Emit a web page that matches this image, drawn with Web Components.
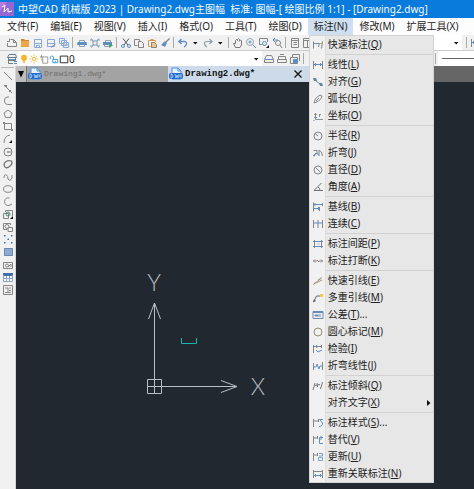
<!DOCTYPE html>
<html lang="zh-CN">
<head>
<meta charset="utf-8">
<title>中望CAD 机械版 2023</title>
<style>
html, body { margin: 0; height: 100%; }
body { font: 10px/17px "Noto Sans", "Noto Sans CJK SC", sans-serif; color: #1c1c1c; overflow: hidden; background: #212830; }
</style>
</head>
<body>
<cad-app></cad-app>
<script>
const B = '#5f8fc2', G = '#858585';
const s = (d, c = G, w = 1) => `<path d="${d}" fill="none" stroke="${c}" stroke-width="${w}"/>`;
const f = (d, c) => `<path d="${d}" fill="${c}"/>`;
const c = (x, y, r, col = G) => `<circle cx="${x}" cy="${y}" r="${r}" fill="none" stroke="${col}"/>`;
const ICONS = {
  new: s('M1.5 6V9.500H10.500V5.500L7.500 2.500H4.500M1 4.500H3.500V1.500M7.500 2.500V5.500H10'),
  open: f('M2 2H5L6 3H10V5H2Z', '#d18a2d') + f('M2 4H10V10H2Z', '#e9a94b'),
  save: s('M2.500 2.500H9.500V10.500H2.500ZM2.500 6.500H9.500M4.500 10V8.500H7.500V10', '#86abd8'),
  saveas: s('M2.500 2.500H9.500V9.500H2.500ZM2.500 6.500H9.500', '#86abd8') + s('M6 10.500L10.500 7', G),
  saveall: s('M1.500 1.500H6.500V6.500H1.500ZM3.500 3.500H8.500V8.500H3.500ZM5.500 5.500H10.500V10.500H5.500ZM5.500 8H10', '#86abd8'),
  print: s('M3.500 5.500V3.500H8.500V5.500M3.500 8V9.500H8.500V8', '#8fa0b0') + f('M2 5H10Q11 5 11 7T10 8H2Q1 8 1 7T2 5Z', B),
  plot: s('M2.500 1.500L4 4M9.500 1.500L8 4M2.500 10.500L4 8M9.500 10.500L8 8M4 4H8V8H4ZM1 3H3M9 3H11M1 9H3M9 9H11', '#7997b5'),
  export: s('M2.500 8V9.500H7M3.500 5V3.500H8.500V5', '#8fa0b0') + f('M1 5H10V8H1Z', B) + f('M7 6L11 8.500L7 11Z', '#4aa373'),
  cut: s('M3 1.500L8 8M9 1.500L4 8', '#555') + c(3, 9, 1.500, B) + c(9, 9, 1.500, B),
  copy: s('M4.500 8.500H1.500V2.500H6.500V4M5.500 4.500H8.500L10.500 6.500V10.500H5.500Z'),
  paste: s('M4.500 9.500H2.500V3.500H9.500V5M4.500 2.500H7.500', '#d09a52') + f('M5 5H9L10 6V11H5Z', '#f0c58c') + s('M5.500 5.500H8.500L10.500 7.500V10.500H5.500Z'),
  brush: s('M10.500 1.500L7 5', '#888', 1.500) + f('M6 4L8 6L6 10L2 8Z', B),
  undo: s('M4.500 2L1.800 4.500L4.500 7M2 4.500H7Q10 4.500 9.500 7Q9 9 7 10', B, 1.300),
  redo: s('M7.500 2L10 4.500L7.500 7M10 4.500H5Q2 4.500 2.500 7Q3 9 5 10', '#929ba4', 1.200),
  hand: s('M3.500 10.500L1.500 6.500H3.500V3.500Q4.500 1.500 5.500 3.500V2.500Q6.500 1 7.500 2.500V4Q9 2 9.500 4V8L8 10.500Z', '#777'),
  zoomin: c(5, 5, 3.500, '#98a6b4') + s('M7.500 7.500L11 11M3.500 5H6.500M5 3.500V6.500', B),
  zoomwin: s('M1.500 1.500H9.500V5M1.500 1.500V7.500H4') + c(6.500, 6.500, 2, B) + f('M11 8V11H8Z', '#111'),
  zoomprev: c(7, 6, 2.500) + s('M9 8L11 11') + s('M4 1L2 3L4 5M2 3H7', B),
  props: s('M2.500 1.500H9.500V10.500H2.500ZM2.500 3.500H9.500M4.500 5.500H8M4.500 7.500H8'),
  grid: s('M1.500 1.500H10.500V10.500H1.500ZM1.500 3.500H10.500M5.500 3.500V10.500'),
  layers: s('M3 1.500H9.500L10.500 4.500H1.500ZM2.500 4.500V7.500H9.500V4.500M2.500 7.500V10.500H7', '#6c7b88') + s('M3 6.500H9M8 8.500H11M8 10.500H11', B),
  bulb: f('M6 1A3.500 3.500 0 0 1 8 7.500L7.500 9H4.500L4 7.500A3.500 3.500 0 0 1 6 1Z', '#f7b52c') + f('M5 9H7V11H5Z', '#f0b858'),
  sun: c(6, 6, 2, '#f2b231') + s('M6 .5V3M6 9V11.500M.5 6H3M9 6H11.500M2 2L4 4M8 8L10 10M10 2L8 4M4 8L2 10', '#f2b231'),
  freeze: s('M4.500 3.500H10.500V11H4.500V3M1 3.500H4M3 1V5M2 6L4 8', '#8a8a8a'),
  lock: s('M1.500 6V3.500Q3 1 5.500 3.500V6M4.500 6.500H10.500V10.500H4.500ZM7.500 8V10', '#3d9ed8', 1.200),
  color: s('M1.500 2.500H10.500V10.500H1.500Z', '#333', 1.200),
  layA: s('M1.500 6.500L3.500 2.500H8.500L10.500 6.500V9.500H1.500Z') + s('M2 6.500H10', B),
  layB: s('M2.500 6.500V3.500H9.500V6.500M1.500 6.500H10.500V9.500H1.500ZM4 1.500H8'),
  layC: s('M3.500 4V1.500H10.500V8M1.500 4.500H8.500V10.500H1.500Z') + f('M4 6H9V10H4Z', B),
  line: s('M2 2L10 10'),
  xline: s('M2 2L10 10') + f('M2 2H5V4H3ZM7 7H9V9H7Z', G),
  pline: s('M7 2H5Q2 3 2.500 6Q3 10 7 9.500H10'),
  polygon: s('M6 2L10 5L8.500 9.500H3.500L2 5Z'),
  rect: s('M2.500 3.500H9.500V9.500H2.500Z') + f('M1 2H3V4H1ZM9 9H11V11H9Z', G),
  arc: s('M2 10Q2 3 8 2') + f('M10 7V10H7Z', '#111'),
  circle: c(6, 6, 4) + s('M5 6H10M6 5V7', G),
  cloud: s('M3 9Q1 6 3.500 4Q6 2 9.500 3Q11 6 8 8Q5 11 3 9Z', '#777', 1.300),
  spline: s('M2 7Q2 3 4.500 4Q6 5 6 8Q8 11 10 7V4'),
  ellipse: '<ellipse cx="6" cy="6" rx="4.500" ry="3.300" fill="none" stroke="#858585"/>',
  earc: s('M7.500 2Q3 1 2.500 5.500Q3 10 7 9.500L10 8'),
  insert: s('M3.500 4V2.500H10.500V8M1.500 5.500H6.500V10.500H1.500Z') + c(6, 6, 2, '#4c8d70') + f('M11 8V11H8Z', '#111'),
  block: s('M5 8.500H1.500V2.500H8.500V4') + c(5, 5.500, 2) + s('M6 6.500H10.500V10.500H6Z'),
  points: f('M2 2h1.500v1.500h-1.500ZM9 2h1.500v1.500h-1.500ZM5.500 5.500h1.500v1.500h-1.500ZM2 9h1.500v1.500h-1.500ZM9 9h1.500v1.500h-1.500Z', '#3e71ae'),
  hatch: f('M2 2H11V10H2Z', '#8faad0') + s('M2.500 2.500H10.500V9.500H2.500Z', '#6b89b0'),
  region: s('M1.500 3.500H10.500V9.500H1.500Z') + c(5, 6.500, 1.500) + s('M6 8L9 5V8'),
  table: f('M1 2H11V10H1Z', '#fff') + f('M1 2H11V5H1Z', '#436fa9') + s('M1.500 4V10.500H10.500V4M1 7.500H11M4.500 5V10M7.500 5V10', '#8ba4c6'),
  mtext: s('M1.500 1.500H10.500V10.500H1.500ZM3 4H6V9M7 4H9M7 6.500H9M3 8.500H9'),
  qdim: s('M1.500 2.500V9.500M10.500 2.500L9.500 9.500M7.500 4L6.500 8') + s('M2 4.500H7', B) + s('M7 4.500H11', '#c9a56e'),
  linear: s('M1.500 2V10M10.500 2V10') + s('M2 5.500H10M4 4L2.500 5.500L4 7M8 4L9.500 5.500L8 7', B),
  aligned: s('M3 4L9 9', B) + f('M1 2L4 2L5 5L2 5ZM7 7L10 7L11 10L8 10Z', '#62819f'),
  arclen: s('M2 10Q2 5 8 2L10 3Q9 8 2 10ZM4 8L7 5'),
  ord: s('M3.500 3V9.500H11M2 4.500H5M7.500 4V7M7 4.500H9', '#8e8e8e') + s('M2 7.500H5M2 10V11', B),
  radius: c(6, 6, 4) + s('M6 6L3 3.500'),
  jog: s('M1.500 3.500H5V7M1 9L4 6M7 9V3Q10 4 10.500 9') + s('M2 9.500L4 6L7 8', B),
  dia: c(6, 6, 4) + s('M3.500 3.500L8.500 8.500'),
  angle: s('M9.500 2L2 9.500H11M6 6Q8 7 8 9.500', '#747474'),
  base: s('M1.500 1.500V10.500M10.500 2V5M7.500 6V10') + s('M2 3.500H10M2 7.500H7M3.500 2L2 3.500L3.500 5M6 6L7.500 7.500L6 9', B),
  cont: s('M1.500 2V10M6 2V10M10.500 2V10') + s('M2 5H10', B),
  space: s('M1 3.500H11M1 8.500H11', B) + s('M2.500 2V10M9.500 2V10') + f('M5 5H8V7H5Z', '#cfe0f0'),
  brk: s('M1 6H5M7 6H11M3 4.500L1.500 6L3 7.500M9 4.500L10.500 6L9 7.500', '#8b8b8b') + s('M5 5L7 7', '#b86b63'),
  qlead: s('M1.500 9.500L10 2.500M4 8L10 5M6 5L9 3', '#a69780') + f('M1 10L3 7L4 8Z', '#b38d61'),
  mlead: s('M1.500 10L4.500 4H8', '#666') + f('M1 10.500L2 7L4 9Z', '#666') + f('M8 2H11V5H8Z', '#f5cb45'),
  tol: s('M1 2.500H11V9.500H1ZM1 3.500H11M4 5V8M6 5V8M8 5V8M2.500 6.500H6', '#6a89b3'),
  center: c(6, 6, 4, '#958b76'),
  inspect: s('M1.500 2V10M2 3.500H10M9.500 2V5') + s('M4 7L6 9L10 7M5 2L4 3.500L5 5', B),
  joglin: s('M1.500 3V10M10.500 2V10') + s('M2 7L4 7L5 4L7 9L8 6H10', B),
  oblique: s('M3 3L1 10M10.500 2L8.500 9M3 5.500L8 4.500M5 3L5.500 7', '#777'),
  style: s('M1.500 2V10M6.500 2V5M2 4H6') + s('M11 2.500H7.500L10.500 6Q11 9 7 9.500', B),
  over: s('M1.500 2V10M5.500 2V5M2 4H6') + s('M11 3.500H7.500V9.500H11M9 6V2', B),
  upd: s('M1.500 2V10M5.500 2V5M2 4H6') + s('M7 2.500H10.500V5H7M6.500 6.500H10.500V9.500H6.500Z', '#7ba5c9'),
  reassoc: s('M1.500 2V10M10.500 2V10M2 3.500H10') + s('M3 7.500H9M4 6L2.500 7.500L4 9M8 6L9.500 7.500L8 9', B),
  caret: f('M4 5H8.500L6.250 7.500Z', '#111'),
  right: f('M6 3L9.500 6L6 9Z', '#111'),
  close: s('M2.500 2.500L9.500 9.500M9.500 2.500L2.500 9.500', '#111', 1.300),
  down: f('M3 3H9L6 9.500Z', '#050505'),
  none: ''
};

const define = (name, css, html) => customElements.define(name, class extends HTMLElement {
  connectedCallback() {
    if (this.shadowRoot) return;
    this.attachShadow({ mode: 'open' }).innerHTML = `<style>${css}</style>${typeof html === 'function' ? html(this) : html}`;
  }
});
const attr = (el, n, d = '') => el.getAttribute(n) ?? d;
const reset = 'button,select{font:inherit;color:inherit;border:0;margin:0;padding:0;background:none;border-radius:0;appearance:none;}';

define('cad-icon', ':host{display:block;width:12px;height:12px;flex:none}svg{display:block;width:100%;height:100%}',
  el => `<svg viewBox="0 0 12 12" aria-hidden="true">${ICONS[attr(el, 'name')]}</svg>`);

define('tool-button', `:host{display:block;flex:none}${reset}button{display:flex;align-items:center;justify-content:center;width:100%;height:100%}`,
  el => `<button type="button" aria-label="${attr(el, 'icon')}"><cad-icon name="${attr(el, 'icon')}"></cad-icon></button>`);

define('tool-sep', ':host{display:block;flex:none;width:1px;height:11px;margin:0 2px;background:#a9a9a9}', '');

define('title-bar', `:host{display:flex;align-items:center;gap:4px;height:18px;background:#087bdc;color:#f4faff;white-space:pre;overflow:hidden}
svg{flex:none}`,
  `<svg width="14" height="14" viewBox="0 0 14 14" aria-hidden="true"><path d="M0 0H14V14H0Z" fill="#9567d3"/><path d="M0 0H7L0 9Z" fill="#b27ae0"/><path d="M2 5L5 3L4 10L8 6V10L12 9" fill="none" stroke="#fff"/></svg><span><slot></slot></span>`);

define('menu-item', `:host{display:block}${reset}
button{display:flex;align-items:center;width:100%;height:17px;padding:0 0 0 2px;gap:4px;text-align:left;white-space:nowrap}
.t{flex:1}`,
  el => { const [a, k, z = ''] = attr(el, 'label').split('_');
    return `<button type="button" role="menuitem"><cad-icon name="${attr(el, 'icon', 'none')}"></cad-icon><span class="t">${a}(<u>${k}</u>)${z}</span>${el.hasAttribute('sub') ? '<cad-icon name="right"></cad-icon>' : ''}</button>`; });

const GROUPS = [
  ['qdim|快速标注_Q'],
  ['linear|线性_L', 'aligned|对齐_G', 'arclen|弧长_H', 'ord|坐标_O'],
  ['radius|半径_R', 'jog|折弯_J', 'dia|直径_D', 'angle|角度_A'],
  ['base|基线_B', 'cont|连续_C'],
  ['space|标注间距_P', 'brk|标注打断_K'],
  ['qlead|快速引线_E', 'mlead|多重引线_M', 'tol|公差_T_...', 'center|圆心标记_M', 'inspect|检验_I', 'joglin|折弯线性_J'],
  ['oblique|标注倾斜_Q', 'none|对齐文字_X|sub'],
  ['style|标注样式_S_...', 'over|替代_V', 'upd|更新_U', 'reassoc|重新关联标注_N']
];
define('drop-menu', `:host{display:block;box-sizing:border-box;width:125px;border:1px solid #d4d4d4;background:linear-gradient(90deg,#f1f1f1 15px,#dedede 15px,#dedede 16px,#e7e7e7 16px);color:#222}
hr{border:0;height:1px;margin:1px 0 1px 16px;background:#d2d2d2}`,
  () => `<div role="menu">${GROUPS.map(g => g.map(i => { const [n, l, x] = i.split('|'); return `<menu-item icon="${n}" label="${l}" ${x || ''}></menu-item>`; }).join('')).join('<hr>')}</div>`);

define('menu-bar', `:host{display:flex;height:17px;padding-left:1px;background:#fdfdfd}${reset}
.m{position:relative;flex:none}button{height:17px;padding:0 6px;white-space:nowrap}
.open>button{background:#cfdff0}drop-menu{position:absolute;left:1px;top:100%;z-index:5}`,
  () => ['文件(F)', '编辑(E)', '视图(V)', '插入(I)', '格式(O)', '工具(T)', '绘图(D)', '标注(N)', '修改(M)', '扩展工具(X)']
    .map(t => t === '标注(N)' ? `<div class="m open"><button type="button" aria-expanded="true">${t}</button><drop-menu></drop-menu></div>` : `<div class="m"><button type="button">${t}</button></div>`).join(''));

const btn = l => l.split(' ').map(n => n === '|' ? '<tool-sep></tool-sep>' : `<tool-button icon="${n}"></tool-button>`).join('');
const rowCss = `${reset}:host{display:flex;align-items:center;height:15px;background:#f1f1f1;overflow:hidden}
tool-button{width:13px;height:15px}tool-button[icon=caret]{width:12px}
.combo{display:flex;align-items:center;background:#fff;height:15px;min-width:0}select{flex:1;min-width:0;height:15px}`;

define('standard-bar', `${rowCss}:host{padding-left:5px;border-bottom:1px solid #ccc}.combo{flex:1;margin-right:2px}.end{display:flex;align-items:center;width:10px;overflow:hidden}`,
  `${btn('new open save saveas saveall | print plot export | cut copy paste brush | undo caret redo caret | hand zoomin zoomwin zoomprev | props grid')}
  <div class="combo"><select aria-label="标注样式"></select><cad-icon name="caret"></cad-icon></div><div class="end">${btn('| linear')}</div>`);

define('layer-bar', `${rowCss}:host{padding-left:5px}.layer{width:244px;padding-left:1px;box-sizing:border-box}.layer cad-icon{width:10px}
.layer .arrow{width:12px}.gap{width:127px}.type{flex:1}.type i{flex:1;height:1px;margin-left:4px;background:#666}.type select{flex:0 0 0}`,
  `${btn('layers')}<div class="combo layer"><cad-icon name="bulb"></cad-icon><cad-icon name="sun"></cad-icon><cad-icon name="freeze"></cad-icon><cad-icon name="lock"></cad-icon><cad-icon name="color"></cad-icon><select aria-label="图层"><option>0</option></select><cad-icon class="arrow" name="caret"></cad-icon></div>${btn('layA layB layC |')}<span class="gap"></span>${btn('|')}<div class="combo type"><select aria-label="线型"></select><i></i></div>`);

define('draw-bar', `:host{display:block;width:16px;background:#f1f1f1;box-sizing:border-box;border-right:1px solid #d5d5d5}
.grip{height:1px;margin:1px 1px 2px;background:#bbb}
.tools{display:grid;grid-template-rows:repeat(18,1fr);height:226px}tool-button{width:15px;min-height:0}`,
  `<div class="grip"></div><div class="tools">${btn('line xline pline polygon rect arc circle cloud spline ellipse earc insert block points hatch region table mtext')}</div>`);

define('doc-tab', `:host{display:flex;width:141px;flex:none;align-items:center;height:16px;background:#a3a3a3;color:#707070;font:8px/16px "Liberation Mono",monospace}
:host([active]){background:#cddaea;color:#111;font-size:9px;font-weight:bold}${reset}
button{display:flex;align-items:center;height:16px;gap:2px;padding-left:1px;flex:1}.x{flex:none;width:12px;margin-right:5px;padding:0}svg{flex:none}`,
  el => `<button type="button" role="tab"><svg width="14" height="14" viewBox="0 0 14 14" aria-hidden="true"><path d="M3 1H9L12 4V12H3Z" fill="#e7f2ff" stroke="#4c91dc"/><path d="M9 1V4H12" fill="none" stroke="#4c91dc"/><rect x="0" y="6" width="14" height="6" rx="2" fill="#256dcb"/><path d="M2 7V11H3L4 9L3 7ZM6 7L7 11L8 8L9 11L10 7M13 8H11V10H13" fill="none" stroke="#cfe2fa" stroke-width=".7"/></svg><slot></slot></button>${el.hasAttribute('active') ? '<button class="x" type="button" aria-label="关闭"><cad-icon name="close"></cad-icon></button>' : ''}`);

define('tab-strip', `:host{display:flex;height:16px;background:#666}tool-button{width:10px;height:16px;background:#bcbcbc;border-right:1px solid #777}`,
  `<tool-button icon="down"></tool-button><doc-tab>Drawing1.dwg*</doc-tab><doc-tab active>Drawing2.dwg*</doc-tab>`);

define('drawing-area', `:host{display:block;background:#212830;overflow:hidden}svg{display:block;width:100%;height:100%}
text{font:300 23px Lato,"Noto Sans",sans-serif;fill:#b4b9be;text-anchor:middle}`,
  `<svg><g fill="none" stroke="#b9bec4"><path d="M131.500 297.500H145.500V311.500H131.500ZM138.500 311V221M131 304.500H221"/><path d="M132.500 237L138.500 221L144.500 237M205 298.500L221 304.500L205 310.500"/></g>
  <path d="M165.500 256V261.500H180.500V256" fill="none" stroke="#18b5ac"/><text x="138" y="209">Y</text><text x="242" y="313">X</text></svg>`);

define('cad-app', `:host{display:flex;flex-direction:column;height:100vh}.work{display:flex;flex:1;min-height:0}.docs{display:flex;flex-direction:column;flex:1;min-width:0}drawing-area{flex:1;min-height:0}`,
  `<title-bar>中望CAD 机械版 2023 | Drawing2.dwg主图幅  标准: 图幅-[ 绘图比例 1:1] - [Drawing2.dwg]</title-bar><menu-bar></menu-bar><standard-bar></standard-bar><layer-bar></layer-bar>
  <div class="work"><draw-bar></draw-bar><div class="docs"><tab-strip></tab-strip><drawing-area></drawing-area></div></div>`);
</script>
</body>
</html>
